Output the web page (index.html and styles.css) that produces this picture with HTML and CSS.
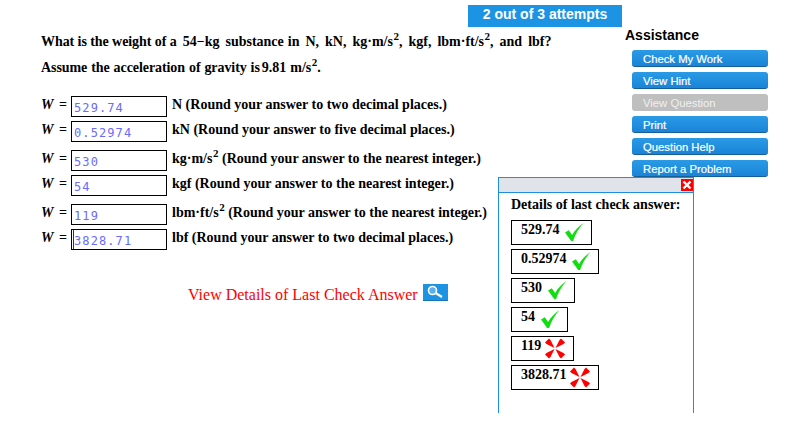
FILE: index.html
```html
<!DOCTYPE html>
<html>
<head>
  <meta charset="UTF-8">
  <title>Question</title>
  <link rel="stylesheet" href="styles.css">
</head>
<body>

<svg class="defs" width="0" height="0">
  <symbol id="tick" viewBox="0 0 20 20">
    <path d="M0 10 L4 7.5 L7.5 12.5 C10 8 14 4 19.5 0 C15 5 11 11 8.5 19 L6.5 19 Z" fill="#11dd11"/>
  </symbol>
  <symbol id="cross" viewBox="0 0 20 20">
    <path d="M9.5 9.5 L5.5 1.5 L4 0 L0 4 L1.5 5.5 Z M10.5 9.5 L14.5 1.5 L16 0 L20 4 L18.5 5.5 Z M9.5 10.5 L1.5 14.5 L0 16 L4 20 L5.5 18.5 Z M10.5 10.5 L18.5 14.5 L20 16 L16 20 L14.5 18.5 Z" fill="#f00"/>
  </symbol>
</svg>

<div class="page">
  <div class="attempts">2 out of 3 attempts</div>

  <div class="content">
    <div class="question">
      <p class="prompt"><span class="lead">What is the weight of a</span> <span class="wide">54&minus;kg</span> <span class="narrow">substance in</span> <span class="wide">N, kN, kg&middot;m/s<sup>2</sup>, kgf, lbm&middot;ft/s<sup>2</sup>, and lbf?</span></p>
      <p class="prompt second"><span class="lead">Assume the acceleration of gravity is</span><span class="value">9.81</span> m/s<sup>2</sup>.</p>

      <div class="answers">
        <div class="row"><i>W</i> <span class="eq">=</span><span class="box">529.74</span><span>N (Round your answer to two decimal places.)</span></div>
        <div class="row"><i>W</i> <span class="eq">=</span><span class="box">0.52974</span><span>kN (Round your answer to five decimal places.)</span></div>
        <div class="row tall"><i>W</i> <span class="eq">=</span><span class="box">530</span><span>kg&middot;m/s<sup>2</sup> (Round your answer to the nearest integer.)</span></div>
        <div class="row"><i>W</i> <span class="eq">=</span><span class="box">54</span><span>kgf (Round your answer to the nearest integer.)</span></div>
        <div class="row tall"><i>W</i> <span class="eq">=</span><span class="box">119</span><span>lbm&middot;ft/s<sup>2</sup> (Round your answer to the nearest integer.)</span></div>
        <div class="row"><i>W</i> <span class="eq">=</span><span class="box focused">3828.71</span><span>lbf (Round your answer to two decimal places.)</span></div>
      </div>

      <div class="details-link">
        <span>View Details of Last Check Answer</span>
        <span class="search-btn">
          <svg width="18" height="14" viewBox="0 0 18 14"><circle cx="6.5" cy="5.5" r="4" fill="#cfe6fa" fill-opacity=".35" stroke="#fff" stroke-width="1.6"/><path d="M9.5 8 L16 12" stroke="#fff" stroke-width="2.2"/></svg>
        </span>
      </div>
    </div>

    <div class="assist">
      <h4>Assistance</h4>
      <a class="btn">Check My Work</a>
      <a class="btn">View Hint</a>
      <a class="btn off">View Question</a>
      <a class="btn">Print</a>
      <a class="btn">Question Help</a>
      <a class="btn">Report a Problem</a>
    </div>
  </div>

  <div class="popup">
    <div class="popup-head">
      <span class="close"><svg width="10" height="10" viewBox="0 0 10 10"><path d="M1.5 1.5 L8.5 8.5 M8.5 1.5 L1.5 8.5" stroke="#fff" stroke-width="2.4"/></svg></span>
    </div>
    <div class="popup-body">
      <div class="popup-title">Details of last check answer:</div>
      <div class="result">529.74 <svg class="mark"><use href="#tick"/></svg></div>
      <div class="result">0.52974 <svg class="mark"><use href="#tick"/></svg></div>
      <div class="result">530 <svg class="mark"><use href="#tick"/></svg></div>
      <div class="result">54 <svg class="mark"><use href="#tick"/></svg></div>
      <div class="result">119 <svg class="mark wrong"><use href="#cross"/></svg></div>
      <div class="result">3828.71 <svg class="mark wrong"><use href="#cross"/></svg></div>
    </div>
  </div>
</div>

</body>
</html>
```

FILE: styles.css
```css
body {
  margin: 0;
  background: #fff;
  font-family: "Liberation Serif", serif;
  font-size: 14px;
  font-weight: bold;
  color: #000;
}

.defs {
  position: absolute;
}

.page {
  position: relative;
  width: 812px;
  height: 432px;
  overflow: hidden;
}

.attempts {
  margin: 5px 0 0 468px;
  width: 154px;
  height: 22px;
  line-height: 19px;
  background: #1c94e3;
  color: #fff;
  font-family: "Liberation Sans", sans-serif;
  font-size: 14px;
  text-align: center;
}

.content {
  display: flex;
}

.question {
  width: 584px;
  padding-left: 41px;
  box-sizing: border-box;
}

.prompt {
  margin: 0;
  height: 26px;
  line-height: 26px;
  white-space: nowrap;
  word-spacing: 2.5px;
}

.prompt:first-child {
  margin-top: 2px;
}

.prompt.second {
  word-spacing: 0.5px;
}

.lead {
  letter-spacing: -0.07px;
  word-spacing: 0;
}

.second .lead {
  word-spacing: 0.5px;
}

.wide {
  word-spacing: 2.5px;
}

.narrow {
  word-spacing: 0.5px;
}

.value {
  margin-left: 2px;
}

sup {
  font-size: 11px;
  line-height: 0;
  vertical-align: 6px;
  margin-left: 0.5px;
}

.answers {
  margin-top: 15px;
}

.row {
  display: flex;
  align-items: flex-start;
  height: 25px;
  line-height: 18px;
  white-space: nowrap;
}

.row.tall {
  margin-top: 4px;
}

.row i {
  width: 18px;
  font-family: "Liberation Serif", serif;
}

.row .eq {
  width: 12px;
}

.box {
  box-sizing: border-box;
  width: 96px;
  height: 21px;
  margin-right: 5px;
  padding: 2px 0 0 2px;
  border: 1px solid #000;
  font-family: "DejaVu Sans Mono", monospace;
  font-size: 12px;
  font-weight: normal;
  letter-spacing: 1.1px;
  color: #6a6aff;
}

.focused {
  box-shadow: inset 1px 0 0 #fff, inset 2px 0 0 #2222cc;
}

.details-link {
  display: flex;
  align-items: center;
  margin: 32px 0 0 147px;
  font-size: 16px;
  font-weight: normal;
  color: #f00;
}

.search-btn {
  display: flex;
  align-items: center;
  justify-content: center;
  width: 25px;
  height: 17px;
  margin: -6px 0 0 5px;
  background: #1c94e3;
  border-bottom: 1px solid #1673b5;
  box-sizing: border-box;
}

.assist {
  padding-left: 41px;
  font-family: "Liberation Sans", sans-serif;
}

.assist h4 {
  margin: 0 0 7px;
  font-size: 14px;
  line-height: 16px;
}

.btn {
  display: block;
  box-sizing: border-box;
  width: 136px;
  height: 17px;
  margin: 0 0 5px 7px;
  padding-left: 11px;
  line-height: 18px;
  border-radius: 3px;
  border-bottom: 1px solid #155f96;
  background: linear-gradient(#2a9ae6, #1a84d8);
  color: #fff;
  font-size: 11.3px;
  font-weight: normal;
  -webkit-text-stroke: 0.2px #fff;
}

.btn.off {
  background: #bfbfbf;
  border-bottom: 0;
  color: #f0f0f0;
  -webkit-text-stroke: 0;
}

.popup {
  position: absolute;
  left: 498px;
  top: 177px;
  box-sizing: border-box;
  width: 196px;
  height: 236px;
  background: #fff;
  border: 1px solid #1c8fe0;
  border-bottom: 0;
}

.popup-head {
  display: flex;
  justify-content: flex-end;
  align-items: center;
  height: 14px;
  background: #e0e3ea;
  border-bottom: 1px solid #1c8fe0;
}

.close {
  display: flex;
  align-items: center;
  justify-content: center;
  width: 12px;
  height: 12px;
  background: #f00;
}

.popup-body {
  padding: 3px 0 0 12px;
}

.popup-title {
  height: 24px;
  line-height: 18px;
  white-space: nowrap;
}

.result {
  width: fit-content;
  box-sizing: border-box;
  height: 25px;
  margin-bottom: 4px;
  padding: 0 7px 0 9px;
  line-height: 18px;
  border: 1px solid #000;
  white-space: nowrap;
}

.mark {
  width: 19px;
  height: 19px;
  vertical-align: top;
  margin: 2px 0 0 2px;
}

.mark.wrong {
  width: 20px;
  height: 21px;
  margin: 1px 1px 0 0;
}
```
